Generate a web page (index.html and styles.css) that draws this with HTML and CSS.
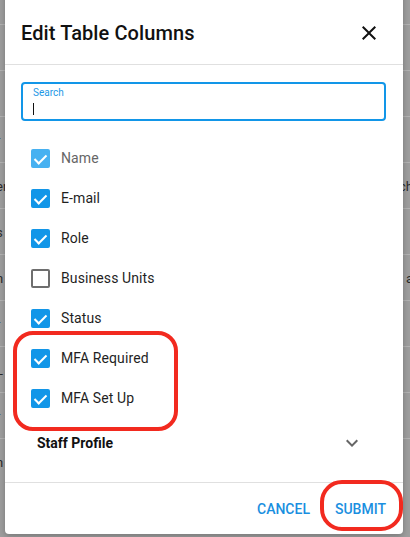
FILE: index.html
```html
<!DOCTYPE html>
<html>
<head>
  <title>Edit Table Columns</title>
  <meta name="viewport" content="width=device-width, initial-scale=1">
  <link rel="stylesheet" href="styles.css">
</head>
<body>

  <div class="backdrop">
    <div class="bg_row"><span class="bg_left"></span></div>
    <div class="bg_row"><span class="bg_left"></span></div>
    <div class="bg_row"><span class="bg_left">r</span></div>
    <div class="bg_row"><span class="bg_left">er</span><span class="bg_right">ch</span></div>
    <div class="bg_row"><span class="bg_left">s</span></div>
    <div class="bg_row"><span class="bg_left">n</span><span class="bg_right">a</span></div>
    <div class="bg_row"><span class="bg_left">r</span></div>
    <div class="bg_row"><span class="bg_left">L</span></div>
    <div class="bg_row"><span class="bg_left">r</span></div>
    <div class="bg_row"><span class="bg_left">n</span></div>
  </div>

  <div class="dialog">
    <div class="dialog_header">
      <h2 class="dialog_title">Edit Table Columns</h2>
      <svg class="close_icon" width="24" height="24" viewBox="0 0 24 24">
        <path d="M19 6.41 17.59 5 12 10.59 6.41 5 5 6.41 10.59 12 5 17.59 6.41 19 12 13.41 17.59 19 19 17.59 13.41 12z" fill="#111"/>
      </svg>
    </div>

    <div class="dialog_content">
      <div class="search_box">
        <span class="search_label">Search</span>
        <span class="caret"></span>
      </div>

      <ul class="column_list">
        <li class="column disabled"><span class="check on"></span>Name</li>
        <li class="column"><span class="check on"></span>E-mail</li>
        <li class="column"><span class="check on"></span>Role</li>
        <li class="column"><span class="check"></span>Business Units</li>
        <li class="column"><span class="check on"></span>Status</li>
        <li class="column"><span class="check on"></span>MFA Required</li>
        <li class="column"><span class="check on"></span>MFA Set Up</li>
      </ul>

      <div class="group">
        <span class="group_name">Staff Profile</span>
        <svg class="chevron" width="24" height="24" viewBox="0 0 24 24">
          <path d="M16.59 8.59 12 13.17 7.41 8.59 6 10l6 6 6-6z" fill="#666"/>
        </svg>
      </div>
    </div>

    <div class="dialog_actions">
      <button class="text_btn">Cancel</button>
      <button class="text_btn">Submit</button>
    </div>
  </div>

  <div class="mark mark_mfa"></div>
  <div class="mark mark_submit"></div>

</body>
</html>
```

FILE: styles.css
```css
body {
  margin: 0;
  width: 410px;
  height: 537px;
  overflow: hidden;
  background-color: #9e9e9e;
  font-family: Roboto, "Liberation Sans", Arial, sans-serif;
  position: relative;
}

/* the table behind the dimmed overlay */
.backdrop {
  padding-top: 25px;
}

.bg_row {
  height: 47px;
  border-top: 1px solid #b3b3b3;
  display: flex;
  justify-content: space-between;
  align-items: center;
  font-size: 13px;
  color: #2a2a2a;
  box-sizing: border-box;
  margin-top: -1px;
}

.bg_left {
  margin-left: -4px;
}

.bg_right {
  margin-right: -3px;
}

/* the dialog sits on top of the table */
.dialog {
  position: absolute;
  left: 5px;
  top: -10px;
  width: 398px;
  height: 544px;
  background-color: #fff;
  border-radius: 4px;
  box-shadow: 0 2px 6px rgba(0, 0, 0, 0.25);
  display: flex;
  flex-direction: column;
}

.dialog_header {
  height: 75px;
  padding: 12px 22px 0 16px;
  box-sizing: border-box;
  display: flex;
  align-items: center;
  justify-content: space-between;
  border-bottom: 1px solid #e0e0e0;
}

.dialog_title {
  margin: 0;
  font-size: 20px;
  font-weight: 500;
  color: #111;
  letter-spacing: 0.1px;
}

.close_icon {
  display: block;
}

.dialog_content {
  flex: 1;
  padding: 17px 17px 0 16px;
}

.search_box {
  height: 39px;
  border: 2px solid #1296e8;
  border-radius: 4px;
  box-sizing: border-box;
  padding: 3px 10px 0 10px;
  display: flex;
  flex-direction: column;
}

.search_label {
  font-size: 10px;
  line-height: 12px;
  color: #1e98e6;
}

.caret {
  display: block;
  width: 1px;
  height: 12px;
  margin-top: 4px;
  background-color: #111;
}

.column_list {
  list-style: none;
  margin: 17px 0 0 0;
  padding: 0;
}

.column {
  height: 40px;
  display: flex;
  align-items: center;
  padding-left: 10px;
  font-size: 14px;
  color: #1f1f1f;
  letter-spacing: 0.1px;
}

.column.disabled {
  color: #666;
}

.check {
  width: 19px;
  height: 19px;
  box-sizing: border-box;
  border: 2px solid #6e6e6e;
  border-radius: 2px;
  margin-right: 11px;
  position: relative;
}

.check.on {
  background-color: #1296e8;
  border-color: #1296e8;
}

.column.disabled .check.on {
  background-color: #47b1f1;
  border-color: #47b1f1;
}

.check.on::after {
  content: "";
  position: absolute;
  left: 4px;
  top: 1px;
  width: 5px;
  height: 10px;
  border-right: 2px solid #fff;
  border-bottom: 2px solid #fff;
  transform: rotate(45deg);
}

.group {
  height: 44px;
  margin-top: 3px;
  padding-left: 16px;
  padding-right: 22px;
  display: flex;
  align-items: center;
  justify-content: space-between;
}

.group_name {
  font-size: 14px;
  font-weight: bold;
  color: #111;
}

.chevron {
  display: block;
}

.dialog_actions {
  height: 51px;
  border-top: 1px solid #e0e0e0;
  display: flex;
  justify-content: flex-end;
  align-items: center;
  padding-right: 9px;
  gap: 9px;
}

.text_btn {
  background: none;
  border: none;
  font-family: Roboto, "Liberation Sans", Arial, sans-serif;
  font-size: 14px;
  font-weight: 500;
  text-transform: uppercase;
  letter-spacing: 0;
  color: #1a8fe0;
  padding: 6px 8px;
}

/* red annotation rings drawn on the screenshot */
.mark {
  position: absolute;
  border: 4px solid #f22a1f;
  box-sizing: border-box;
}

.mark_mfa {
  left: 13px;
  top: 331px;
  width: 165px;
  height: 100px;
  border-radius: 20px;
}

.mark_submit {
  left: 320px;
  top: 480px;
  width: 83px;
  height: 51px;
  border-radius: 22px;
}
```
